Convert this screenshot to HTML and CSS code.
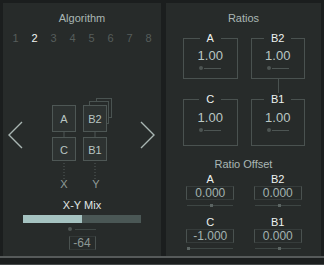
FILE: index.html
```html
<!DOCTYPE html>
<html lang="en">
<head>
    <meta charset="UTF-8">
    <title>Algorithm / Ratios</title>
    <link rel="stylesheet" href="styles.css">
</head>
<body>
    <div class="frame">
        <div class="panels">
            <div class="panel algo">
                <div class="title">Algorithm</div>
                <div class="algo-nums">
                    <span>1</span><span class="active">2</span><span>3</span><span>4</span>
                    <span>5</span><span>6</span><span>7</span><span>8</span>
                </div>

                <div class="algo-row">
                    <svg class="chevron" width="18" height="30" viewBox="7 120 18 30">
                        <polyline points="22,122 9,135 22,148" />
                    </svg>
                    <svg class="diagram" width="80" height="96" viewBox="42 96 80 96">
                        <rect class="stack" x="96.5" y="98.5" width="15" height="19" />
                        <rect class="stack" x="89.5" y="101.5" width="19" height="22" />
                        <line class="link" x1="64" y1="131" x2="64" y2="138" />
                        <line class="link" x1="95" y1="131" x2="95" y2="138" />
                        <rect class="op" x="52.5" y="105.5" width="23" height="26" />
                        <rect class="op" x="83.5" y="105.5" width="23" height="26" />
                        <rect class="op" x="52.5" y="137.5" width="23" height="23" />
                        <rect class="op" x="83.5" y="137.5" width="23" height="23" />
                        <line class="dots" x1="64" y1="163" x2="64" y2="179" />
                        <line class="dots" x1="95" y1="163" x2="95" y2="179" />
                        <text x="64" y="122.5">A</text>
                        <text x="95" y="122.5">B2</text>
                        <text x="64" y="153.5">C</text>
                        <text x="95" y="153.5">B1</text>
                        <text class="axis" x="64" y="188">X</text>
                        <text class="axis" x="96" y="188">Y</text>
                    </svg>
                    <svg class="chevron" width="18" height="30" viewBox="139 120 18 30">
                        <polyline points="141,122 154,135 141,148" />
                    </svg>
                </div>

                <div class="mix-title">X-Y Mix</div>
                <div class="mix-bar"><div class="mix-fill" style="width: 50%"></div></div>
                <div class="mini-slider wide"><span class="dot"></span><span class="line"></span></div>
                <div class="mix-value">-64</div>
            </div>

            <div class="panel ratios">
                <div class="title">Ratios</div>
                <div class="ratio-grid">
                    <fieldset class="ratio">
                        <legend>A</legend>
                        <div class="ratio-value">1.00</div>
                        <div class="mini-slider"><span class="dot"></span><span class="line"></span></div>
                    </fieldset>
                    <fieldset class="ratio linked">
                        <legend>B2</legend>
                        <div class="ratio-value">1.00</div>
                        <div class="mini-slider"><span class="dot"></span><span class="line"></span></div>
                    </fieldset>
                    <fieldset class="ratio">
                        <legend>C</legend>
                        <div class="ratio-value">1.00</div>
                        <div class="mini-slider"><span class="dot"></span><span class="line"></span></div>
                    </fieldset>
                    <fieldset class="ratio">
                        <legend>B1</legend>
                        <div class="ratio-value">1.00</div>
                        <div class="mini-slider"><span class="dot"></span><span class="line"></span></div>
                    </fieldset>
                </div>

                <div class="title offset-title">Ratio Offset</div>
                <div class="offset-grid">
                    <div class="offset">
                        <div class="offset-label">A</div>
                        <div class="offset-field">0.000</div>
                        <div class="track"><span class="knob" style="left: 50%"></span></div>
                    </div>
                    <div class="offset">
                        <div class="offset-label">B2</div>
                        <div class="offset-field">0.000</div>
                        <div class="track"><span class="knob" style="left: 50%"></span></div>
                    </div>
                    <div class="offset">
                        <div class="offset-label">C</div>
                        <div class="offset-field">-1.000</div>
                        <div class="track"><span class="knob" style="left: 0%"></span></div>
                    </div>
                    <div class="offset">
                        <div class="offset-label">B1</div>
                        <div class="offset-field">0.000</div>
                        <div class="track"><span class="knob" style="left: 50%"></span></div>
                    </div>
                </div>
            </div>
        </div>
        <div class="footer"></div>
    </div>
</body>
</html>
```

FILE: styles.css
```css
* {
    margin: 0;
    padding: 0;
    box-sizing: border-box;
}

body {
    font-family: 'Liberation Sans', Arial, sans-serif;
    background: #1b1e1e;
    width: 324px;
    height: 265px;
    overflow: hidden;
    color: #b4c0bd;
}

.frame {
    padding-top: 3px;
    padding-left: 3px;
}

.panels {
    display: flex;
    gap: 5px;
    height: 253px;
}

.panel {
    background: #272b2a;
    height: 100%;
}

.algo {
    width: 158px;
}

.ratios {
    width: 155px;
}

.title {
    text-align: center;
    font-size: 11px;
    line-height: 14px;
    padding-top: 8px;
    color: #aab7b4;
}

/* Algorithm selector */
.algo-nums {
    display: flex;
    padding-left: 3px;
    margin-top: 6px;
}

.algo-nums span {
    width: 19px;
    text-align: center;
    font-size: 11px;
    line-height: 14px;
    color: #565d5b;
}

.algo-nums .active {
    color: #f2f5f4;
}

.algo-row {
    display: flex;
    justify-content: space-between;
    align-items: flex-start;
    padding: 0 4px;
    margin-top: 51px;
}

.chevron {
    margin-top: 24px;
}

.chevron polyline {
    fill: none;
    stroke: #a9b6b3;
    stroke-width: 1.4;
}

.diagram .op {
    fill: #2d3231;
    stroke: #4e5755;
}

.diagram .stack {
    fill: #272b2a;
    stroke: #4a5351;
}

.diagram .link {
    stroke: #4e5755;
}

.diagram .dots {
    stroke: #545c5a;
    stroke-dasharray: 1 2;
}

.diagram text {
    font-family: 'Liberation Sans', Arial, sans-serif;
    font-size: 11px;
    fill: #b9c5c2;
    text-anchor: middle;
}

.diagram .axis {
    fill: #8f9b98;
}

/* X-Y mix */
.mix-title {
    text-align: center;
    font-size: 11px;
    line-height: 14px;
    margin-top: 6px;
    color: #e0e7e5;
}

.mix-bar {
    width: 118px;
    height: 8px;
    margin: 3px auto 0;
    background: #4a5755;
}

.mix-fill {
    height: 100%;
    background: #a5c3c1;
}

.mini-slider {
    display: flex;
    align-items: center;
    justify-content: center;
    gap: 1px;
    height: 4px;
    margin-top: 3px;
}

.mini-slider .dot {
    width: 4px;
    height: 4px;
    border-radius: 50%;
    background: #4d5553;
}

.mini-slider .line {
    width: 17px;
    height: 1px;
    background: #4d5553;
}

.mini-slider.wide {
    margin-top: 4px;
    gap: 3px;
}

.mini-slider.wide .line {
    width: 21px;
    background: #3f4745;
}

.mix-value {
    width: 27px;
    height: 14px;
    margin: 5px auto 0;
    border: 1px solid #333938;
    border-left-color: #4a5250;
    border-right-color: #4a5250;
    text-align: center;
    font-size: 12px;
    line-height: 12px;
    color: #8c9896;
}

/* Ratios */
.ratio-grid {
    display: grid;
    grid-template-columns: 1fr 1fr;
    column-gap: 13px;
    row-gap: 14px;
    padding: 0 16px 0 17px;
    margin-top: 7px;
}

.ratio {
    border: 1px solid #4a5250;
    min-width: 0;
    padding: 4px 0 8px;
    position: relative;
}

.ratio:nth-child(n+3) {
    padding: 5px 0 13px;
}

.ratio legend {
    margin: 0 auto;
    padding: 0 7px;
    font-size: 11px;
    line-height: 12px;
    color: #eef2f1;
}

.ratio-value {
    text-align: center;
    font-size: 13px;
    line-height: 15px;
    color: #bac7c4;
}

.ratio .mini-slider {
    margin-top: 3px;
}

.linked::after {
    content: '';
    position: absolute;
    left: 50%;
    bottom: -15px;
    width: 1px;
    height: 14px;
    background: #4a5250;
}

/* Ratio offset */
.offset-title {
    padding-top: 0;
    margin-top: 11px;
}

.offset-grid {
    display: grid;
    grid-template-columns: 1fr 1fr;
    column-gap: 13px;
    row-gap: 10px;
    padding: 0 16px 0 17px;
    margin-top: 2px;
}

.offset {
    display: flex;
    flex-direction: column;
    align-items: center;
}

.offset-label {
    font-size: 11px;
    line-height: 12px;
    color: #eef2f1;
}

.offset-field {
    width: 48px;
    height: 14px;
    margin-top: 1px;
    border: 1px solid #363c3b;
    border-left-color: #4a5250;
    border-right-color: #4a5250;
    text-align: center;
    font-size: 12px;
    line-height: 12px;
    color: #a3b3b0;
}

.track {
    position: relative;
    width: 46px;
    height: 1px;
    margin-top: 5px;
    background: #3e4644;
}

.knob {
    position: absolute;
    top: -1px;
    width: 3px;
    height: 3px;
    background: #5b6462;
}

.footer {
    height: 9px;
    border-top: 2px solid #565a5a;
    border-bottom: 1px solid #454949;
    margin-left: -3px;
    background: #1b1e1e;
}
```
